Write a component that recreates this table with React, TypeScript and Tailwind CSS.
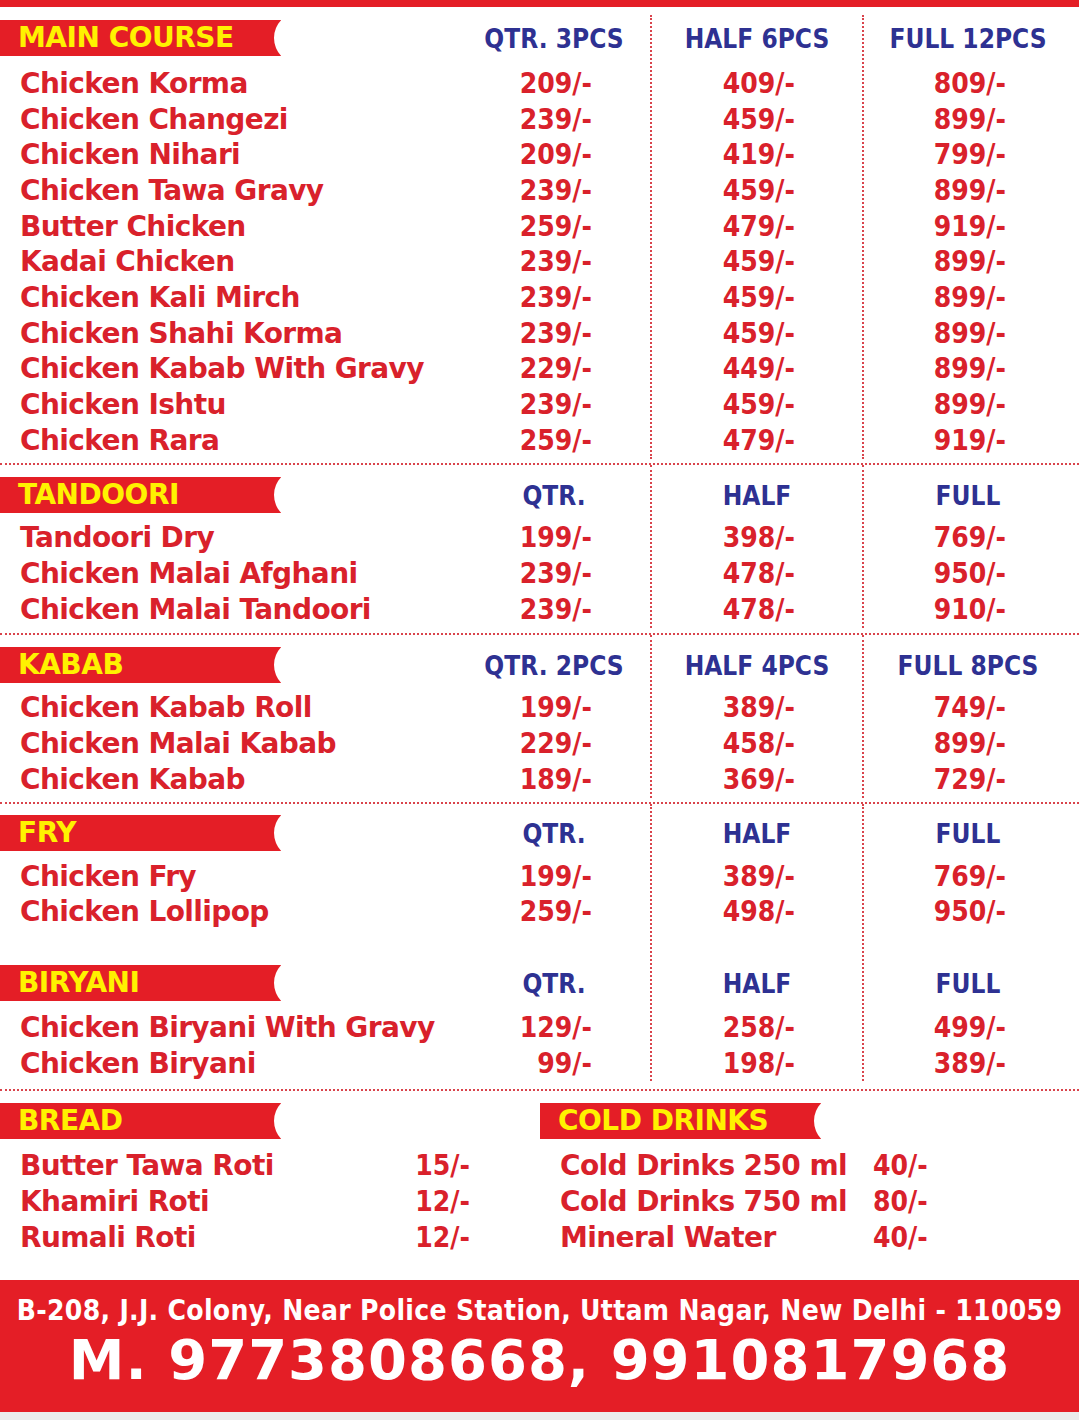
const NAME = "font-['DejaVu_Sans',sans-serif] font-bold";
const COND = "font-['DejaVu_Sans_Condensed','DejaVu_Sans',sans-serif] font-bold [font-stretch:condensed]";

type Row = [string, string, string, string];

type Block = {
  title: string;
  heads: [string, string, string];
  items: Row[];
  top: string;
  gap: string;
};

const mainCourse: Block = {
  title: "MAIN COURSE",
  heads: ["QTR. 3PCS", "HALF 6PCS", "FULL 12PCS"],
  top: "pt-[5px]",
  gap: "mt-[10px]",
  items: [
    ["Chicken Korma", "209/-", "409/-", "809/-"],
    ["Chicken Changezi", "239/-", "459/-", "899/-"],
    ["Chicken Nihari", "209/-", "419/-", "799/-"],
    ["Chicken Tawa Gravy", "239/-", "459/-", "899/-"],
    ["Butter Chicken", "259/-", "479/-", "919/-"],
    ["Kadai Chicken", "239/-", "459/-", "899/-"],
    ["Chicken Kali Mirch", "239/-", "459/-", "899/-"],
    ["Chicken Shahi Korma", "239/-", "459/-", "899/-"],
    ["Chicken Kabab With Gravy", "229/-", "449/-", "899/-"],
    ["Chicken Ishtu", "239/-", "459/-", "899/-"],
    ["Chicken Rara", "259/-", "479/-", "919/-"],
  ],
};

const tandoori: Block = {
  title: "TANDOORI",
  heads: ["QTR.", "HALF", "FULL"],
  top: "pt-[12px]",
  gap: "mt-[8px]",
  items: [
    ["Tandoori Dry", "199/-", "398/-", "769/-"],
    ["Chicken Malai Afghani", "239/-", "478/-", "950/-"],
    ["Chicken Malai Tandoori", "239/-", "478/-", "910/-"],
  ],
};

const kabab: Block = {
  title: "KABAB",
  heads: ["QTR. 2PCS", "HALF 4PCS", "FULL 8PCS"],
  top: "pt-[12px]",
  gap: "mt-[8px]",
  items: [
    ["Chicken Kabab Roll", "199/-", "389/-", "749/-"],
    ["Chicken Malai Kabab", "229/-", "458/-", "899/-"],
    ["Chicken Kabab", "189/-", "369/-", "729/-"],
  ],
};

const fry: Block = {
  title: "FRY",
  heads: ["QTR.", "HALF", "FULL"],
  top: "pt-[11px]",
  gap: "mt-[8px]",
  items: [
    ["Chicken Fry", "199/-", "389/-", "769/-"],
    ["Chicken Lollipop", "259/-", "498/-", "950/-"],
  ],
};

const biryani: Block = {
  title: "BIRYANI",
  heads: ["QTR.", "HALF", "FULL"],
  top: "pt-[35px]",
  gap: "mt-[9px]",
  items: [
    ["Chicken Biryani With Gravy", "129/-", "258/-", "499/-"],
    ["Chicken Biryani", "99/-", "198/-", "389/-"],
  ],
};

const breads = [
  ["Butter Tawa Roti", "15/-"],
  ["Khamiri Roti", "12/-"],
  ["Rumali Roti", "12/-"],
];

const drinks = [
  ["Cold Drinks 250 ml", "40/-"],
  ["Cold Drinks 750 ml", "80/-"],
  ["Mineral Water", "40/-"],
];

// column wrappers: nudges so prices sit where the printed menu has them
const colClass = [
  "pr-[2px]",
  "border-l-2 border-dotted border-[#d9444c]",
  "border-l-2 border-dotted border-[#d9444c] pr-[7px]",
];

function Banner({ title }: { title: string }) {
  return (
    <div className="relative flex h-[36px] w-[281px] items-center overflow-hidden bg-[#e41e26] pl-[18px]">
      <span className={`${NAME} text-[28px] leading-none tracking-[-0.5px] text-[#fff200]`}>{title}</span>
      <span className="absolute left-[274px] top-[-8px] h-[52px] w-[52px] rounded-full bg-white" />
    </div>
  );
}

function ItemName({ name }: { name: string }) {
  return (
    <div className={`${NAME} flex h-[35.7px] items-center pl-[20px] text-[28px] leading-none tracking-[-0.6px] text-[#d9212b]`}>
      {name}
    </div>
  );
}

function Section({ blocks, bottom }: { blocks: Block[]; bottom: string }) {
  return (
    <div className={`grid grid-cols-[460px_190px_212px_217px] ${bottom}`}>
      <div>
        {blocks.map((b) => (
          <div key={b.title} className={b.top}>
            <Banner title={b.title} />
            <div className={b.gap}>
              {b.items.map((it) => (
                <ItemName key={it[0]} name={it[0]} />
              ))}
            </div>
          </div>
        ))}
      </div>
      {[0, 1, 2].map((ci) => (
        <div key={ci} className={colClass[ci]}>
          {blocks.map((b) => (
            <div key={b.title} className={b.top}>
              <div className={`${COND} flex h-[36px] items-center justify-center pt-[2px] text-[26px] leading-none text-[#2e3192]`}>
                {b.heads[ci]}
              </div>
              <div className={b.gap}>
                {b.items.map((it) => (
                  <div key={it[0]} className="flex h-[35.7px] items-center justify-center">
                    <span className={`${COND} w-[76px] text-right text-[28px] leading-none text-[#d9212b]`}>
                      {it[ci + 1]}
                    </span>
                  </div>
                ))}
              </div>
            </div>
          ))}
        </div>
      ))}
    </div>
  );
}

function Rule() {
  return <div className="border-t-2 border-dotted border-[#d9444c]" />;
}

export default function App() {
  return (
    <div className="flex h-[1420px] w-[1079px] flex-col bg-white">
      <div className="h-[7px] bg-[#e41e26]" />
      <div className="h-[8px]" />

      <Section blocks={[mainCourse]} bottom="pb-[4px]" />
      <Rule />
      <Section blocks={[tandoori]} bottom="pb-[5px]" />
      <Rule />
      <Section blocks={[kabab]} bottom="pb-[4px]" />
      <Rule />
      <Section blocks={[fry, biryani]} bottom="pb-[8px]" />
      <Rule />

      <div className="flex pt-[12px]">
        <div className="w-[540px]">
          <Banner title="BREAD" />
          <div className="mt-[9px] w-[470px]">
            {breads.map(([n, p]) => (
              <div key={n} className="flex items-center justify-between">
                <ItemName name={n} />
                <span className={`${COND} text-[28px] leading-none text-[#d9212b]`}>{p}</span>
              </div>
            ))}
          </div>
        </div>
        <div>
          <Banner title="COLD DRINKS" />
          <div className="mt-[9px]">
            {drinks.map(([n, p]) => (
              <div key={n} className="flex items-center">
                <div className="w-[333px]">
                  <ItemName name={n} />
                </div>
                <span className={`${COND} text-[28px] leading-none text-[#d9212b]`}>{p}</span>
              </div>
            ))}
          </div>
        </div>
      </div>

      <div className="mt-auto flex h-[132px] flex-col items-center bg-[#e41e26] pt-[14px] text-white">
        <div className={`${COND} whitespace-nowrap text-[28px] leading-[34px] tracking-[0.3px]`}>
          B-208, J.J. Colony, Near Police Station, Uttam Nagar, New Delhi - 110059
        </div>
        <div className={`${NAME} mt-[2px] whitespace-nowrap text-[56px] leading-[60px] tracking-[1px]`}>
          M. 9773808668, 9910817968
        </div>
      </div>
      <div className="h-[8px] bg-[#ececec]" />
    </div>
  );
}
